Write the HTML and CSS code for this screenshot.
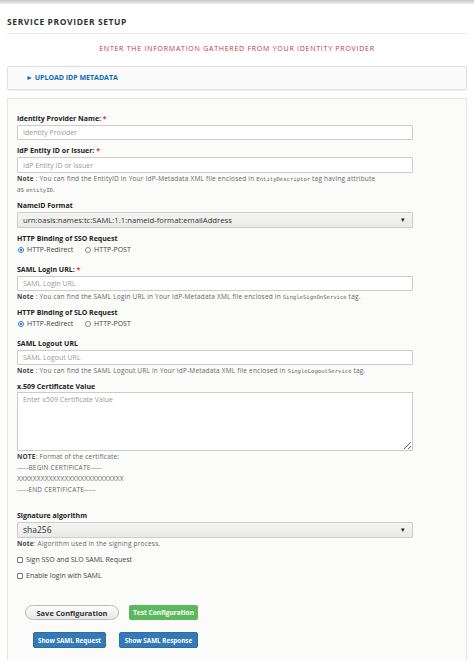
FILE: index.html
```html
<!DOCTYPE html>
<html lang="en">
<head>
    <meta charset="UTF-8">
    <title>Service Provider Setup</title>
    <link rel="stylesheet" href="styles.css">
</head>
<body>

<div class="top-shadow"></div>

<div class="page">
    <h1 class="page-title">Service Provider Setup</h1>

    <p class="idp-notice">Enter the information gathered from your Identity Provider</p>

    <div class="upload-box">
        <a href="#" class="upload-link">&#9658; Upload IDP Metadata</a>
    </div>

    <form class="sp-form" onsubmit="return false">
        <div class="field">
            <label>Identity Provider Name: <span class="req">*</span></label>
            <input type="text" class="text-input" placeholder="Identity Provider">
        </div>

        <div class="field">
            <label>IdP Entity ID or Issuer: <span class="req">*</span></label>
            <input type="text" class="text-input tall" placeholder="IdP Entity ID or Issuer">
            <p class="note"><b>Note</b> : You can find the EntityID in Your IdP-Metadata XML file enclosed in <code>EntityDescriptor</code> tag having attribute<br>as <code>entityID</code>.</p>
        </div>

        <div class="field">
            <label>NameID Format</label>
            <div class="select-box">urn:oasis:names:tc:SAML:1.1:nameid-format:emailAddress</div>
        </div>

        <div class="field radio-field">
            <label>HTTP Binding of SSO Request</label>
            <div class="radio-row">
                <span class="radio checked"></span>HTTP-Redirect
                <span class="radio"></span>HTTP-POST
            </div>
        </div>

        <div class="field">
            <label>SAML Login URL: <span class="req">*</span></label>
            <input type="text" class="text-input" placeholder="SAML Login URL">
            <p class="note"><b>Note</b> : You can find the SAML Login URL in Your IdP-Metadata XML file enclosed in <code>SingleSignOnService</code> tag.</p>
        </div>

        <div class="field radio-field">
            <label>HTTP Binding of SLO Request</label>
            <div class="radio-row">
                <span class="radio checked"></span>HTTP-Redirect
                <span class="radio"></span>HTTP-POST
            </div>
        </div>

        <div class="field">
            <label>SAML Logout URL</label>
            <input type="text" class="text-input" placeholder="SAML Logout URL">
            <p class="note"><b>Note</b> : You can find the SAML Logout URL in Your IdP-Metadata XML file enclosed in <code>SingleLogoutService</code> tag.</p>
        </div>

        <div class="field">
            <label>x.509 Certificate Value</label>
            <textarea class="cert-input" placeholder="Enter x509 Certificate Value"></textarea>
            <div class="note cert-note">
                <b>NOTE</b>: Format of the certificate:<br>
                -----BEGIN CERTIFICATE-----<br>
                XXXXXXXXXXXXXXXXXXXXXXXXXXX<br>
                -----END CERTIFICATE-----
            </div>
        </div>

        <div class="field sig-field">
            <label>Signature algorithm</label>
            <div class="select-box">sha256</div>
            <p class="note"><b>Note</b>: Algorithm used in the signing process.</p>
        </div>

        <div class="check-row"><span class="checkbox"></span>Sign SSO and SLO SAML Request</div>
        <div class="check-row"><span class="checkbox"></span>Enable login with SAML</div>

        <div class="button-row first">
            <button class="btn-save">Save Configuration</button>
            <button class="btn btn-green">Test Configuration</button>
        </div>
        <div class="button-row second">
            <button class="btn btn-blue">Show SAML Request</button>
            <button class="btn btn-blue">Show SAML Response</button>
        </div>
    </form>
</div>

</body>
</html>
```

FILE: styles.css
```css
body {
    margin: 0;
    background: #fff;
    font-family: "Open Sans", Arial, sans-serif;
    color: #333;
}
.top-shadow {
    height: 4px;
    background: linear-gradient(#c8c8c8, #eee);
}
.page {
    padding: 0 7px;
}
.page-title {
    margin: 0;
    padding-top: 12px;
    height: 17px;
    font-size: 8.5px;
    line-height: 12px;
    font-weight: bold;
    letter-spacing: 0.6px;
    text-transform: uppercase;
    color: #333;
    border-bottom: 1px solid #e8e8e8;
}
.idp-notice {
    margin: 10px 0 0;
    text-align: center;
    font-size: 7px;
    line-height: 10px;
    letter-spacing: 0.75px;
    text-transform: uppercase;
    color: #c5323b;
}
.upload-box {
    margin-top: 12px;
    height: 22px;
    background: #fafafa;
    border: 1px solid #e0e0e0;
    border-radius: 2px;
    box-shadow: 0 1px 1px rgba(0,0,0,0.06);
    padding-left: 18px;
    font-size: 7px;
    line-height: 22px;
}
.upload-link {
    color: #0a6bb3;
    font-weight: bold;
    text-decoration: none;
    text-transform: uppercase;
}
.sp-form {
    margin-top: 8px;
    background: #fbfbf9;
    border: 1px solid #e4e4e2;
    border-bottom: none;
    padding: 14px 9px 12px;
    font-size: 7px;
}
.field {
    margin-bottom: 5px;
}
.field label {
    display: block;
    font-size: 7px;
    line-height: 11px;
    font-weight: bold;
    color: #222;
}
.req {
    color: #e0353d;
}
.text-input {
    display: block;
    box-sizing: border-box;
    width: 90%;
    height: 15px;
    margin: 1px 0 0;
    padding: 0 5px;
    border: 1px solid #ccc;
    border-radius: 1px;
    background: #fff;
    font-family: inherit;
    font-size: 7px;
}
.text-input.tall {
    height: 16px;
}
.text-input::placeholder,
.cert-input::placeholder {
    color: #999;
}
.note {
    margin: 0;
    font-size: 6.5px;
    line-height: 11px;
    color: #666;
    letter-spacing: 0.2px;
}
.note b {
    color: #444;
}
.note code {
    font-family: "DejaVu Sans Mono", monospace;
    font-size: 5.6px;
    line-height: 1px;
    letter-spacing: 0;
    color: #666;
}
.select-box {
    box-sizing: border-box;
    width: 90%;
    height: 16px;
    margin-top: 1px;
    padding: 0 5px;
    border: 1px solid #ccc;
    border-radius: 1px;
    background: linear-gradient(#f5f5f3, #e9e9e7);
    font-size: 7.7px;
    line-height: 14px;
    color: #333;
    position: relative;
}
.select-box::after {
    content: "\25BE";
    position: absolute;
    right: 7px;
    top: 0;
    font-size: 7px;
    color: #222;
}
.radio-field {
    margin-bottom: 9px;
}
.radio-row {
    font-size: 7px;
    line-height: 11px;
    color: #444;
}
.radio {
    display: inline-block;
    box-sizing: border-box;
    width: 6px;
    height: 6px;
    margin: 0 3px 0 1px;
    border: 1px solid #888;
    border-radius: 50%;
    background: #fff;
    vertical-align: -0.5px;
}
.radio-row .radio:nth-child(2) {
    margin-left: 10px;
}
.radio.checked {
    border-color: #2a7de0;
    background: radial-gradient(circle, #2a7de0 45%, #fff 55%);
}
.cert-input {
    display: block;
    box-sizing: border-box;
    width: 90%;
    height: 59px;
    margin: 0;
    padding: 2px 5px;
    border: 1px solid #ccc;
    background: #fff;
    font-family: inherit;
    font-size: 7px;
    resize: vertical;
}
.cert-note {
    margin-top: 0;
}
.sig-field {
    margin-top: 15px;
}
.sig-field .select-box {
    font-size: 8.5px;
}
.check-row {
    font-size: 7px;
    line-height: 11px;
    color: #444;
    margin-top: 5px;
}
.checkbox {
    display: inline-block;
    box-sizing: border-box;
    width: 6px;
    height: 6px;
    margin-right: 3px;
    border: 1px solid #777;
    border-radius: 1px;
    background: #fff;
    vertical-align: -0.5px;
}
.button-row {
    display: flex;
    align-items: center;
}
.button-row.first {
    margin-top: 24px;
    padding-left: 8px;
    gap: 10px;
}
.button-row.second {
    margin-top: 12px;
    padding-left: 16px;
    gap: 13px;
}
.btn-save {
    width: 94px;
    height: 15px;
    padding: 0;
    border: 1px solid #bbb;
    border-radius: 8px;
    background: linear-gradient(#fdfdfd, #e6e6e6);
    font-family: inherit;
    font-size: 7.5px;
    font-weight: bold;
    color: #333;
}
.btn {
    height: 15px;
    padding: 0;
    border: none;
    border-radius: 2px;
    font-family: inherit;
    font-size: 6.3px;
    font-weight: bold;
    color: #fff;
    white-space: nowrap;
}
.btn-green {
    width: 69px;
    background: #5cb85c;
    font-size: 6.6px;
}
.btn-blue {
    height: 16px;
    background: #337ab7;
    border: 1px solid #2e6da4;
}
.btn-blue:first-child {
    width: 73px;
}
.btn-blue:last-child {
    width: 79px;
}
```
